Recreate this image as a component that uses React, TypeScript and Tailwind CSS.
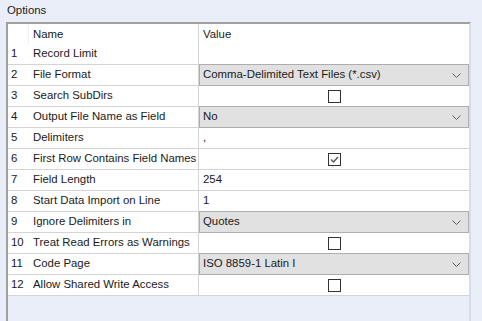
import React from "react";

type Row = { name: string; kind: "text" | "select" | "check"; value?: string; checked?: boolean };

const rows: Row[] = [
  { name: "Record Limit", kind: "text", value: "" },
  { name: "File Format", kind: "select", value: "Comma-Delimited Text Files (*.csv)" },
  { name: "Search SubDirs", kind: "check", checked: false },
  { name: "Output File Name as Field", kind: "select", value: "No" },
  { name: "Delimiters", kind: "text", value: "," },
  { name: "First Row Contains Field Names", kind: "check", checked: true },
  { name: "Field Length", kind: "text", value: "254" },
  { name: "Start Data Import on Line", kind: "text", value: "1" },
  { name: "Ignore Delimiters in", kind: "select", value: "Quotes" },
  { name: "Treat Read Errors as Warnings", kind: "check", checked: false },
  { name: "Code Page", kind: "select", value: "ISO 8859-1 Latin I" },
  { name: "Allow Shared Write Access", kind: "check", checked: false },
];

function Chevron() {
  return (
    <svg width="9" height="5" viewBox="0 0 9 5" className="absolute right-[7px] top-[8px]">
      <path d="M0.5 0.5 L4.5 4.5 L8.5 0.5" fill="none" stroke="#606060" strokeWidth="1" />
    </svg>
  );
}

function Checkbox({ checked }: { checked?: boolean }) {
  return (
    <div className="w-[13px] h-[13px] border border-[#333333] bg-white relative">
      {checked && (
        <svg width="11" height="11" viewBox="0 0 11 11" className="absolute left-0 top-0">
          <path d="M2 5.5 L4.5 8 L9 3" fill="none" stroke="#555555" strokeWidth="1.3" />
        </svg>
      )}
    </div>
  );
}

export default function App() {
  return (
    <div
      className="w-[482px] h-[321px] bg-[#e9eef8] flex flex-col overflow-hidden text-[11.4px] text-[#1a1a1a] whitespace-nowrap"
      style={{ fontFamily: '"Liberation Sans", Arial, sans-serif' }}
    >
      <div className="h-[22px] pl-[7px] pt-[2px] leading-[16px]">Options</div>
      <div className="ml-[6px] w-[465px] flex-1 border-t-2 border-t-[#a0a0a0] border-l-2 border-l-[#a0a0a0] border-r-2 border-r-[#d8dce4]">
        <div className="w-[461px] bg-white">
          <div className="flex h-[20px] items-center">
            <div className="w-[21px] h-full border-r border-[#eeeeee]"></div>
            <div className="w-[170px] pl-[4px] pt-px h-full flex items-center border-r border-[#d4d4d4]">Name</div>
            <div className="flex-1 pl-[4px] pt-px">Value</div>
          </div>
          {rows.map((r, i) => (
            <div key={i} className="flex h-[21px] border-b border-[#d4d4d4]">
              <div className="w-[21px] pl-[3px] flex items-center">{i + 1}</div>
              <div className="w-[170px] pl-[4px] flex items-center border-r border-[#d4d4d4] overflow-hidden">{r.name}</div>
              {r.kind === "select" ? (
                <div className="flex-1 relative bg-[#e1e1e1] border border-[#adadad] -mt-px h-[22px] pl-[3px] flex items-center">
                  {r.value}
                  <Chevron />
                </div>
              ) : r.kind === "check" ? (
                <div className="flex-1 flex items-center justify-center">
                  <Checkbox checked={r.checked} />
                </div>
              ) : (
                <div className="flex-1 pl-[4px] flex items-center">{r.value}</div>
              )}
            </div>
          ))}
        </div>
      </div>
    </div>
  );
}
